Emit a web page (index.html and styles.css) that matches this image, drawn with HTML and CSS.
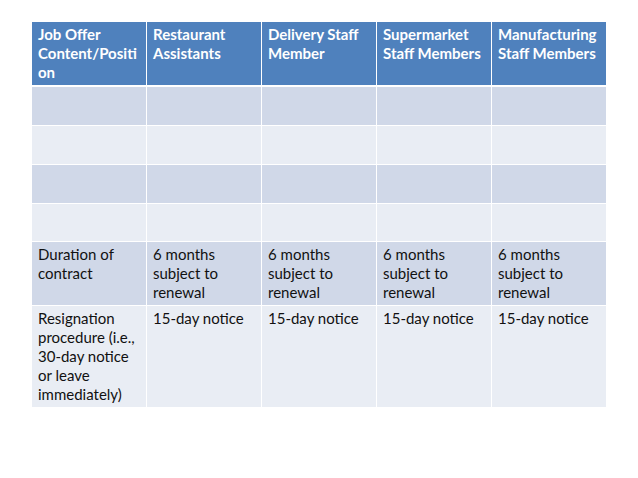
FILE: index.html
```html
<!DOCTYPE html>
<html>
<head>
<meta charset="utf-8">
<link rel="stylesheet" href="styles.css">
</head>
<body>
<table class="offer">
  <thead>
    <tr class="head">
      <th>Job Offer Content/Position</th>
      <th>Restaurant Assistants</th>
      <th>Delivery Staff Member</th>
      <th>Supermarket Staff Members</th>
      <th>Manufacturing Staff Members</th>
    </tr>
  </thead>
  <tbody>
    <tr class="odd empty"><td></td><td></td><td></td><td></td><td></td></tr>
    <tr class="even empty"><td></td><td></td><td></td><td></td><td></td></tr>
    <tr class="odd empty"><td></td><td></td><td></td><td></td><td></td></tr>
    <tr class="even empty last-empty"><td></td><td></td><td></td><td></td><td></td></tr>
    <tr class="odd">
      <td>Duration of contract</td>
      <td>6 months subject to renewal</td>
      <td>6 months subject to renewal</td>
      <td>6 months subject to renewal</td>
      <td>6 months subject to renewal</td>
    </tr>
    <tr class="even tall">
      <td>Resignation procedure (i.e., 30-day notice or leave immediately)</td>
      <td>15-day notice</td>
      <td>15-day notice</td>
      <td>15-day notice</td>
      <td>15-day notice</td>
    </tr>
  </tbody>
</table>
</body>
</html>
```

FILE: styles.css
```css
html, body {
  margin: 0;
  padding: 0;
  background: #ffffff;
}

body {
  padding: 22px 0 0 32px;
  font-family: Lato, "Open Sans", "Liberation Sans", sans-serif;
  font-size: 15px;
  line-height: 19px;
  color: #111111;
}

.offer {
  border-collapse: separate;
  border-spacing: 0;
  table-layout: fixed;
  width: 575px;
}

.offer th,
.offer td {
  width: 102px;
  border-right: 1px solid #ffffff;
  border-bottom: 1px solid #ffffff;
  padding: 3px 6px 3px 6px;
  text-align: left;
  vertical-align: top;
  overflow-wrap: anywhere;
}

.offer th {
  background: #4f81bd;
  color: #ffffff;
  font-weight: bold;
  border-bottom-width: 2px;
}

.offer tr.head {
  height: 63px;
}

.offer tr.odd td {
  background: #d0d8e8;
}

.offer tr.even td {
  background: #e9edf4;
}

.offer tr.empty {
  height: 39px;
}

.offer tr.last-empty {
  height: 38px;
}

.offer tr.odd:not(.empty) {
  height: 63px;
}

.offer tr.tall {
  height: 102px;
}
```
